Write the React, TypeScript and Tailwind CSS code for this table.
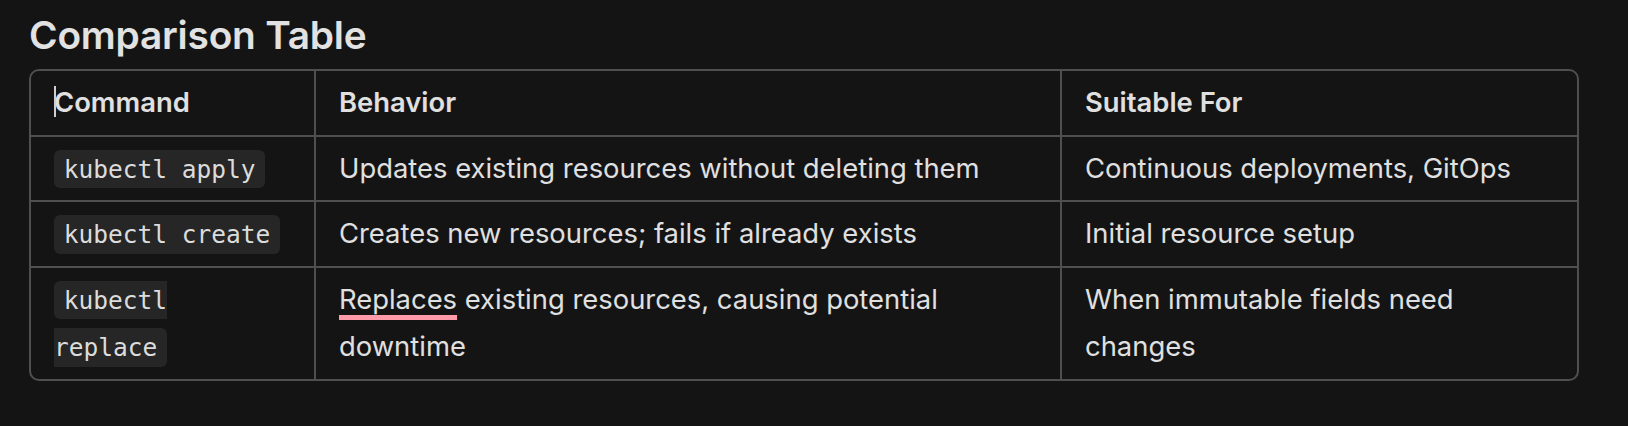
import React from 'react'

const rows = [
  {
    cmd: <>kubectl apply</>,
    behavior: <>Updates existing resources without deleting them</>,
    use: <>Continuous deployments, GitOps</>,
  },
  {
    cmd: <>kubectl create</>,
    behavior: <>Creates new resources; fails if already exists</>,
    use: <>Initial resource setup</>,
  },
  {
    cmd: <>kubectl<br />replace</>,
    behavior: (
      <>
        <span className="underline decoration-[#ff9aab] decoration-[5px] underline-offset-[6px] [text-decoration-skip-ink:none]">Replaces</span> existing resources, causing potential
        <br />
        downtime
      </>
    ),
    use: <>When immutable fields need<br />changes</>,
  },
]

function Code({ children }: { children: React.ReactNode }) {
  return (
    <code className="rounded-[6px] bg-[#262626] px-[0.4em] py-[0.2em] font-['DejaVu_Sans_Mono',monospace] text-[24.5px] leading-none text-[#dcdcdc]">
      {children}
    </code>
  )
}

export default function App() {
  return (
    <div className="min-h-[426px] w-full bg-[#141414] px-[29px] pt-[9px] font-['Inter',sans-serif] text-[#e0e0e0]">
      <h2 className="text-[38.8px] font-semibold leading-[52px] tracking-[-0.2px] text-[#e2e2e2]">Comparison Table</h2>
      <div className="mt-[8px] w-[1550px] overflow-hidden rounded-[10px] border-2 border-[#4f4f4f]">
        <table className="w-full table-fixed border-collapse text-[27.4px] leading-[47.5px]">
          <colgroup>
            <col className="w-[284px]" />
            <col className="w-[746px]" />
            <col />
          </colgroup>
          <thead>
            <tr className="border-b-2 border-[#4f4f4f]">
              <th className="px-[23px] py-[8px] text-left font-semibold">
                <span className="relative">
                  <span className="absolute left-0 top-[1px] h-[31px] w-[2px] bg-[#cfcfcf]" />
                  Command
                </span>
              </th>
              <th className="border-l-2 border-[#4f4f4f] px-[23px] py-[8px] text-left font-semibold">Behavior</th>
              <th className="border-l-2 border-[#4f4f4f] px-[23px] py-[8px] text-left font-semibold">Suitable For</th>
            </tr>
          </thead>
          <tbody>
            {rows.map((r, i) => (
              <tr key={i} className={i < rows.length - 1 ? 'border-b-2 border-[#4f4f4f]' : ''}>
                <td className="px-[23px] py-[8px] align-top">
                  <Code>{r.cmd}</Code>
                </td>
                <td className="border-l-2 border-[#4f4f4f] px-[23px] py-[8px] align-top">{r.behavior}</td>
                <td className="border-l-2 border-[#4f4f4f] px-[23px] py-[8px] align-top">{r.use}</td>
              </tr>
            ))}
          </tbody>
        </table>
      </div>
    </div>
  )
}
